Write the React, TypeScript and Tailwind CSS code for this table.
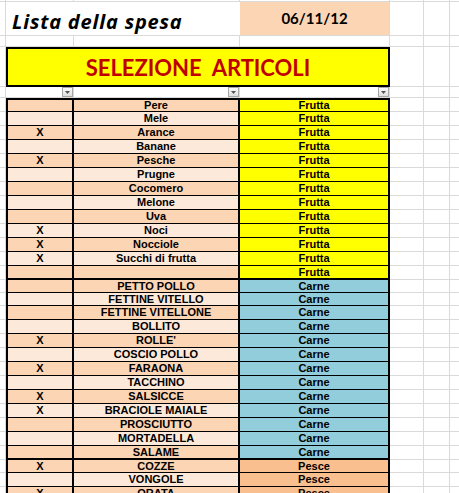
import React from "react";

type Item = { x: string; name: string; h: 12 | 13 | 14; thick?: boolean };

const H: Record<number, string> = { 12: "h-[12px]", 13: "h-[13px]", 14: "h-[14px]" };

const frutta: Item[] = [
  { x: "", name: "Pere", h: 12 },
  { x: "", name: "Mele", h: 14 },
  { x: "X", name: "Arance", h: 14 },
  { x: "", name: "Banane", h: 14 },
  { x: "X", name: "Pesche", h: 14 },
  { x: "", name: "Prugne", h: 14 },
  { x: "", name: "Cocomero", h: 14 },
  { x: "", name: "Melone", h: 14 },
  { x: "", name: "Uva", h: 14 },
  { x: "X", name: "Noci", h: 14 },
  { x: "X", name: "Nocciole", h: 14 },
  { x: "X", name: "Succhi di frutta", h: 14 },
  { x: "", name: "", h: 14, thick: true },
];

const carne: Item[] = [
  { x: "", name: "PETTO POLLO", h: 13 },
  { x: "", name: "FETTINE VITELLO", h: 13 },
  { x: "", name: "FETTINE VITELLONE", h: 14 },
  { x: "", name: "BOLLITO", h: 14 },
  { x: "X", name: "ROLLE'", h: 14 },
  { x: "", name: "COSCIO POLLO", h: 14 },
  { x: "X", name: "FARAONA", h: 14 },
  { x: "", name: "TACCHINO", h: 14 },
  { x: "X", name: "SALSICCE", h: 14 },
  { x: "X", name: "BRACIOLE MAIALE", h: 14 },
  { x: "", name: "PROSCIUTTO", h: 14 },
  { x: "", name: "MORTADELLA", h: 14 },
  { x: "", name: "SALAME", h: 14, thick: true },
];

const pesce: Item[] = [
  { x: "X", name: "COZZE", h: 13 },
  { x: "", name: "VONGOLE", h: 14 },
  { x: "X", name: "ORATA", h: 14 },
];

const TXT = "font-['Liberation_Sans',Arial,sans-serif] text-[11px] font-bold leading-none text-black";

function GrayTail() {
  return (
    <>
      <div className="w-[34px] shrink-0 border-r border-b border-[#dadada]" />
      <div className="w-[26px] shrink-0 border-r border-b border-[#dadada]" />
      <div className="flex-1 border-b border-[#dadada]" />
    </>
  );
}

function DataRow({ it, dark, kind }: { it: Item; dark: boolean; kind: "F" | "C" | "P" }) {
  const peach = dark ? "bg-[#fcd5b4]" : "bg-[#fde9d9]";
  const bot = it.thick ? "border-b-2" : "border-b";
  const dbg = kind === "F" ? "bg-[#ffff00]" : kind === "C" ? "bg-[#92cddc]" : "bg-[#fabf8f]";
  const label = kind === "F" ? "Frutta" : kind === "C" ? "Carne" : "Pesce";
  return (
    <div className={`flex shrink-0 ${H[it.h]}`}>
      <div className="w-[6px] shrink-0 border-r border-b border-[#dadada]" />
      <div className={`w-[68px] shrink-0 border-l-2 border-r-2 border-black ${bot} ${peach} flex items-center justify-center ${TXT}`}>
        {it.x}
      </div>
      <div className={`w-[166px] shrink-0 border-r-2 border-black ${bot} ${peach} flex items-center justify-center ${TXT}`}>
        {it.name}
      </div>
      <div className={`w-[150px] shrink-0 border-r-2 border-black ${bot} ${dbg} flex items-center justify-center ${TXT}`}>
        {label}
      </div>
      <GrayTail />
    </div>
  );
}

function Drop() {
  return (
    <div className="w-[11px] h-full shrink-0 border border-[#a6a6a6] bg-linear-to-b from-[#fbfbfb] to-[#dedede] flex items-center justify-center">
      <svg width="5" height="3" viewBox="0 0 5 3">
        <path d="M0 0h5L2.5 3z" fill="#555" />
      </svg>
    </div>
  );
}

export default function App() {
  return (
    <div className="w-[459px] h-[493px] overflow-hidden bg-white flex flex-col">
      {/* top partial row */}
      <div className="flex shrink-0 h-[2px]">
        <div className="w-[6px] shrink-0 border-r border-b border-[#dadada]" />
        <div className="w-[68px] shrink-0 border-r border-b border-[#dadada]" />
        <div className="w-[166px] shrink-0 border-r border-b border-[#dadada]" />
        <div className="w-[150px] shrink-0 border-r border-b border-[#dadada]" />
        <GrayTail />
      </div>
      {/* title row */}
      <div className="flex shrink-0 h-[34px]">
        <div className="w-[6px] shrink-0 border-r border-b border-[#dadada]" />
        <div className="w-[234px] shrink-0 border-b border-[#dadada] flex items-center pl-[6px] pt-[7px]">
          <span className="font-['Open_Sans',sans-serif] italic font-bold text-[20px] tracking-[0.8px] leading-none text-black whitespace-nowrap">
            Lista della spesa
          </span>
        </div>
        <div className="w-[150px] shrink-0 border-r border-b border-[#dadada] bg-[#fcd5b4] flex items-center justify-center">
          <span className="font-['Lato',sans-serif] font-bold text-[15px] leading-none text-black">06/11/12</span>
        </div>
        <GrayTail />
      </div>
      {/* spacer row */}
      <div className="flex shrink-0 h-[11px]">
        <div className="w-[6px] shrink-0 border-r border-b border-[#dadada]" />
        <div className="w-[68px] shrink-0 border-r border-b border-[#dadada]" />
        <div className="w-[166px] shrink-0 border-r border-b border-[#dadada]" />
        <div className="w-[150px] shrink-0 border-r border-b border-[#dadada]" />
        <GrayTail />
      </div>
      {/* header box */}
      <div className="flex shrink-0 h-[40px]">
        <div className="w-[6px] shrink-0 border-r border-b border-[#dadada]" />
        <div className="w-[384px] shrink-0 border-2 border-black bg-[#ffff00] flex items-center justify-center pt-[2px]">
          <span className="font-['Lato',sans-serif] font-bold text-[22px] leading-none text-[#c00000] whitespace-pre">
            SELEZIONE  ARTICOLI
          </span>
        </div>
        <GrayTail />
      </div>
      {/* filter row */}
      <div className="flex shrink-0 h-[11px]">
        <div className="w-[6px] shrink-0 border-r border-b border-[#dadada]" />
        <div className="w-[68px] shrink-0 border-r border-b border-[#dadada] flex justify-end">
          <Drop />
        </div>
        <div className="w-[166px] shrink-0 border-r border-b border-[#dadada] flex justify-end">
          <Drop />
        </div>
        <div className="w-[150px] shrink-0 border-r border-b border-[#dadada] flex justify-end">
          <Drop />
        </div>
        <GrayTail />
      </div>
      {/* table top border */}
      <div className="flex shrink-0 h-[2px]">
        <div className="w-[6px] shrink-0 border-r border-[#dadada]" />
        <div className="w-[384px] shrink-0 bg-black" />
        <div className="w-[34px] shrink-0 border-r border-[#dadada]" />
        <div className="w-[26px] shrink-0 border-r border-[#dadada]" />
        <div className="flex-1" />
      </div>
      {frutta.map((it, i) => (
        <DataRow key={"f" + i} it={it} dark={i % 2 === 0} kind="F" />
      ))}
      {carne.map((it, i) => (
        <DataRow key={"c" + i} it={it} dark={i % 2 === 0} kind="C" />
      ))}
      {pesce.map((it, i) => (
        <DataRow key={"p" + i} it={it} dark={i % 2 === 0} kind="P" />
      ))}
    </div>
  );
}
